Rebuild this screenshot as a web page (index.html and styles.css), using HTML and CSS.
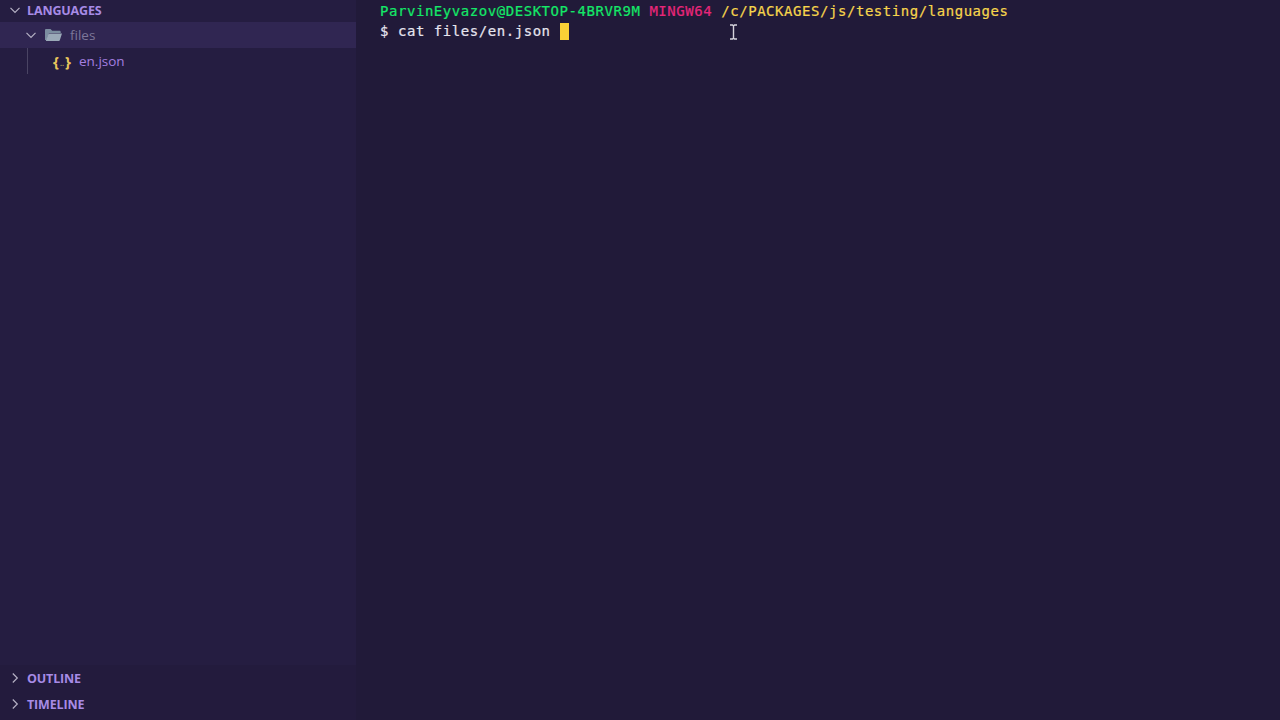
FILE: index.html
```html
<!DOCTYPE html>
<html lang="en">
<head>
<meta charset="utf-8">
<title>languages</title>
<link rel="stylesheet" href="styles.css">
</head>
<body>
<div class="app">
  <aside class="sidebar">
    <div class="tree">
      <div class="head head-top">
        <svg class="chev" viewBox="0 0 16 16"><path d="M3.5 5.8 8 10.3l4.5-4.5"/></svg>
        <span>LANGUAGES</span>
      </div>
      <div class="row row-folder">
        <svg class="chev" viewBox="0 0 16 16"><path d="M3.5 5.8 8 10.3l4.5-4.5"/></svg>
        <svg class="folder" viewBox="0 0 18 14"><path class="folder-back" d="M1 2.2C1 1.5 1.5 1 2.2 1h4.3l1.7 1.8h7.3c.7 0 1.2.5 1.2 1.2v1H5L2.6 12H1z"/><path class="folder-front" d="M4.6 5.6H18l-2.2 6.7c-.1.4-.5.7-.9.7H1.8z"/></svg>
        <span>files</span>
      </div>
      <div class="row row-file">
        <span class="guide"></span>
        <span class="json-icon">{<i>..</i>}</span>
        <span>en.json</span>
      </div>
    </div>
    <div class="panels">
      <div class="head">
        <svg class="chev" viewBox="0 0 16 16"><path d="M5.8 3.5 10.3 8l-4.5 4.5"/></svg>
        <span>OUTLINE</span>
      </div>
      <div class="head">
        <svg class="chev" viewBox="0 0 16 16"><path d="M5.8 3.5 10.3 8l-4.5 4.5"/></svg>
        <span>TIMELINE</span>
      </div>
    </div>
  </aside>
  <main class="terminal">
    <div class="line"><span class="green">ParvinEyvazov@DESKTOP-4BRVR9M</span> <span class="pink">MINGW64</span> <span class="yellow">/c/PACKAGES/js/testing/languages</span></div>
    <div class="line">$ cat files/en.json <span class="cursor"></span></div>
    <svg class="ibeam" viewBox="0 0 9 16"><path d="M1 1h2.5l1 1 1-1H8M1 15h2.5l1-1 1 1H8M4.5 2v12"/></svg>
  </main>
</div>
</body>
</html>
```
FILE: styles.css
```css
* { box-sizing: border-box; }
html, body { margin: 0; height: 100%; overflow: hidden; }
body { background: #211a39; font-family: "Open Sans", "Noto Sans", sans-serif; }
.app { display: flex; height: 720px; }
.sidebar {
  width: 356px;
  flex: none;
  background: #251d41;
  display: flex;
  flex-direction: column;
  justify-content: space-between;
}
.tree { display: flex; flex-direction: column; }
.head {
  height: 26px;
  display: flex;
  align-items: center;
  padding-left: 7px;
  gap: 4px;
  font-size: 12.5px;
  font-weight: 700;
  color: #a78be6;
  letter-spacing: -0.15px;
}
.head-top { height: 20px; margin-bottom: 2px; }
.panels { display: flex; flex-direction: column; height: 55px; background: #231b3d; }
.chev { width: 16px; height: 16px; fill: none; stroke: #b5b1c4; stroke-width: 1.2; flex: none; }
.row {
  height: 26px;
  display: flex;
  align-items: center;
  font-size: 13.5px;
  position: relative;
}
.row-folder { background: #302652; color: #7d7799; padding-left: 23px; }
.folder { width: 18px; height: 14px; margin: 0 8px 0 5px; flex: none; }
.folder-back { fill: #7b8da0; }
.folder-front { fill: #9aa9b8; }
.row-file { color: #a47fe0; padding-left: 53px; }
.guide { position: absolute; left: 27px; top: 0; bottom: 0; width: 1px; background: #4a4463; }
.json-icon { width: 18px; margin-right: 8px; color: #e9c65c; font-size: 15px; font-weight: 700; white-space: nowrap; display: flex; justify-content: space-between; align-items: center; }
.json-icon i { font-style: normal; font-size: 7px; color: #b9a15c; padding-top: 4px; }
.terminal {
  flex: 1;
  padding: 1px 0 0 24px;
  position: relative;
  font-family: "DejaVu Sans Mono", "Liberation Mono", monospace;
  font-size: 14px;
  letter-spacing: 0.55px;
  color: #e6e4ee;
  -webkit-text-stroke: 0.2px currentColor;
}
.line { height: 21px; line-height: 21px; white-space: pre; }
.line + .line { margin-top: -1px; }
.green { color: #14e868; }
.pink { color: #e8267a; }
.yellow { color: #f6d54c; }
.cursor { display: inline-block; width: 9px; height: 17px; background: #fbd136; vertical-align: -4px; }
.ibeam { position: absolute; left: 373px; top: 24px; width: 9px; height: 16px; fill: none; stroke: #d5d3dc; stroke-width: 1.4; }
```
